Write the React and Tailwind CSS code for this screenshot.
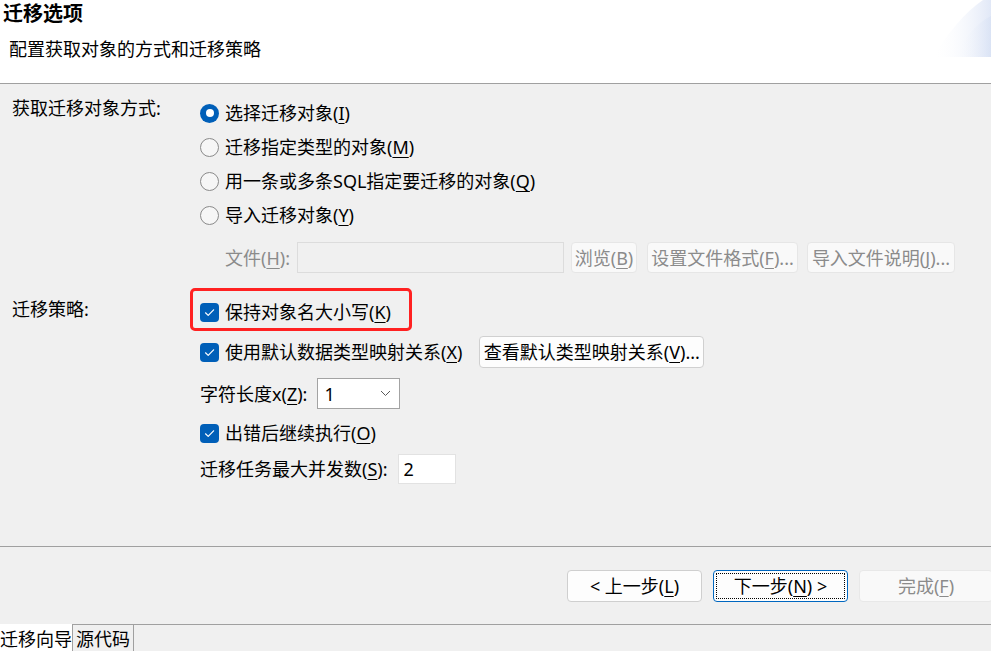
import React from 'react';

// 迁移向导 - 迁移选项页
function Mn({ children }) {
  return <u className="underline underline-offset-[3px] decoration-1">{children}</u>;
}

function Radio({ checked }) {
  if (checked) {
    return (
      <span className="flex h-[19px] w-[19px] shrink-0 items-center justify-center rounded-full bg-[#005fb8]">
        <span className="h-[8px] w-[8px] rounded-full bg-white" />
      </span>
    );
  }
  return <span className="h-[19px] w-[19px] shrink-0 rounded-full border border-[#8a8a8a] bg-[#f6f6f6]" />;
}

function Check() {
  return (
    <span className="flex h-[19px] w-[19px] shrink-0 items-center justify-center rounded-[4px] bg-[#005fb8]">
      <svg width="13" height="13" viewBox="0 0 13 13" fill="none">
        <path d="M2.5 6.8 L5.2 9.4 L10.6 3.8" stroke="white" strokeWidth="1.2" strokeLinecap="round" strokeLinejoin="round" />
      </svg>
    </span>
  );
}

function DisabledButton({ w, children }) {
  return (
    <div className={`flex h-[31px] items-center justify-center whitespace-nowrap rounded-[4px] border border-[#e6e6e6] bg-[#f9f9f9] text-[#8b8b8b] ${w}`}>
      {children}
    </div>
  );
}

export default function App() {
  const radios = [
    { label: '选择迁移对象(', key: 'I', checked: true },
    { label: '迁移指定类型的对象(', key: 'M' },
    { label: '用一条或多条SQL指定要迁移的对象(', key: 'Q' },
    { label: '导入迁移对象(', key: 'Y' },
  ];

  return (
    <div className="h-[651px] w-[991px] overflow-hidden bg-[#f0f0f0] font-['Noto_Sans','Noto_Sans_CJK_SC',sans-serif] text-[18px] leading-[24px] text-black">
      {/* Header */}
      <div className="relative h-[84px] border-b border-[#a0a0a0] bg-white">
        <div className="pl-[3px] pt-[2px] text-[20px] font-bold leading-[24px]">迁移选项</div>
        <div className="pl-[9px] pt-[11px]">配置获取对象的方式和迁移策略</div>
        <svg className="absolute right-0 top-0" width="58" height="57" viewBox="0 0 58 57">
          <defs>
            <linearGradient id="hg" x1="0" y1="0" x2="1" y2="0">
              <stop offset="0" stopColor="#ffffff" stopOpacity="0" />
              <stop offset="1" stopColor="#e1e8f7" />
            </linearGradient>
            <linearGradient id="hg2" x1="0" y1="0" x2="1" y2="0">
              <stop offset="0" stopColor="#ffffff" stopOpacity="0" />
              <stop offset="1" stopColor="#d6e0f4" />
            </linearGradient>
          </defs>
          <path d="M0 57 C14 34 32 12 50 0 L58 0 L58 57 Z" fill="url(#hg)" />
          <path d="M22 57 C30 40 42 24 58 16 L58 57 Z" fill="url(#hg2)" opacity="0.6" />
        </svg>
      </div>

      {/* Body */}
      <div className="h-[462px] pt-[12px]">
        <div className="flex">
          <div className="w-[200px] shrink-0 pl-[12px]">获取迁移对象方式:</div>
          <div className="flex flex-col">
            {radios.map((r) => (
              <div key={r.key} className="flex h-[34px] items-center gap-[6px]">
                <Radio checked={r.checked} />
                <span className="whitespace-nowrap">
                  {r.label}
                  <Mn>{r.key}</Mn>)
                </span>
              </div>
            ))}
          </div>
        </div>

        <div className="mt-[10px] flex h-[31px] items-center pl-[225px] text-[#8b8b8b]">
          <span className="whitespace-nowrap">
            文件(<Mn>H</Mn>):
          </span>
          <div className="ml-[7px] h-[31px] w-[267px] border border-[#dcdcdc] bg-[#f0f0f0]" />
          <div className="ml-[7px]">
            <DisabledButton w="w-[66px]">
              浏览(<Mn>B</Mn>)
            </DisabledButton>
          </div>
          <div className="ml-[10px]">
            <DisabledButton w="w-[151px]">
              设置文件格式(<Mn>F</Mn>)...
            </DisabledButton>
          </div>
          <div className="ml-[9px]">
            <DisabledButton w="w-[148px]">
              导入文件说明(<Mn>J</Mn>)...
            </DisabledButton>
          </div>
        </div>

        <div className="mt-[23px] flex">
          <div className="w-[200px] shrink-0 pl-[12px] pt-[1px]">迁移策略:</div>
          <div className="flex flex-col">
            <div className="relative flex h-[32px] items-center gap-[6px]">
              <Check />
              <span className="whitespace-nowrap">
                保持对象名大小写(<Mn>K</Mn>)
              </span>
              <div className="absolute -left-[10px] -top-[8px] h-[43px] w-[222px] rounded-[5px] border-[3px] border-[#ff2121]" />
            </div>

            <div className="mt-[8px] flex h-[32px] items-center">
              <Check />
              <span className="ml-[6px] whitespace-nowrap">
                使用默认数据类型映射关系(<Mn>X</Mn>)
              </span>
              <div className="ml-[17px] flex h-[32px] w-[225px] items-center justify-center whitespace-nowrap rounded-[4px] border border-[#d0d0d0] bg-[#fdfdfd]">
                查看默认类型映射关系(<Mn>V</Mn>)...
              </div>
            </div>

            <div className="mt-[10px] flex h-[31px] items-center">
              <span className="whitespace-nowrap">
                字符长度x(<Mn>Z</Mn>):
              </span>
              <div className="ml-[10px] flex h-[31px] w-[83px] items-center justify-between border border-[#a3a3a3] bg-white pl-[6px] pr-[8px]">
                <span>1</span>
                <svg width="11" height="7" viewBox="0 0 11 7" fill="none">
                  <path d="M1 1 L5.5 5.5 L10 1" stroke="#5a5a5a" strokeWidth="1" />
                </svg>
              </div>
            </div>

            <div className="mt-[8px] flex h-[32px] items-center gap-[6px]">
              <Check />
              <span className="whitespace-nowrap">
                出错后继续执行(<Mn>O</Mn>)
              </span>
            </div>

            <div className="mt-[5px] flex h-[30px] items-center">
              <span className="whitespace-nowrap">
                迁移任务最大并发数(<Mn>S</Mn>):
              </span>
              <div className="ml-[10px] flex h-[30px] w-[58px] items-center border border-[#e2e2e2] bg-white pl-[5px]">2</div>
            </div>
          </div>
        </div>
      </div>

      {/* Footer buttons */}
      <div className="flex h-[78px] gap-[11px] border-t border-[#a0a0a0] pl-[567px] pt-[23px]">
        <div className="flex h-[32px] w-[135px] shrink-0 items-center justify-center whitespace-nowrap rounded-[4px] border border-[#cfcfcf] bg-[#fdfdfd]">
          &lt; 上一步(<Mn>L</Mn>)
        </div>
        <div className="flex h-[32px] w-[135px] shrink-0 items-center justify-center rounded-[4px] border border-[#0067c0] bg-[#fdfdfd] p-[2px]">
          <div className="flex h-full w-full items-center justify-center whitespace-nowrap border border-dotted border-black">
            下一步(<Mn>N</Mn>) &gt;
          </div>
        </div>
        <div className="flex h-[32px] w-[134px] shrink-0 items-center justify-center whitespace-nowrap rounded-[4px] border border-[#e8e8e8] bg-[#f9f9f9] text-[#8b8b8b]">
          完成(<Mn>F</Mn>)
        </div>
      </div>

      {/* Tabs */}
      <div className="flex h-[27px]">
        <div className="flex h-[27px] w-[72px] items-center whitespace-nowrap bg-white pt-[2px]">迁移向导</div>
        <div className="flex h-[27px] w-[62px] items-center whitespace-nowrap border-x border-t border-[#a0a0a0] pl-[3px] pt-[2px]">源代码</div>
        <div className="flex-1 border-t border-[#a0a0a0]" />
      </div>
    </div>
  );
}
